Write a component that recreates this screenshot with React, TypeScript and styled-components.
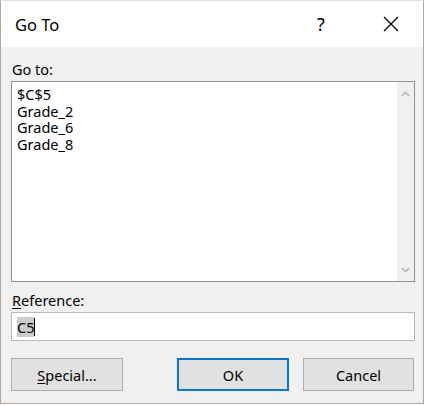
import React from "react";
import styled, { createGlobalStyle } from "styled-components";

const Global = createGlobalStyle`
  html, body { margin: 0; padding: 0; background: #ffffff; }
  body { font-family: "Noto Sans", "Open Sans", sans-serif; }
`;

const Window = styled.div`
  box-sizing: border-box;
  width: 424px;
  height: 404px;
  border: 1px solid #b5a697;
  border-top-color: #e6e0da;
  display: flex;
  flex-direction: column;
  background: #f0f0f0;
  color: #000;
`;

const TitleBar = styled.div`
  height: 46px;
  background: #ffffff;
  display: flex;
  align-items: center;
  padding-left: 14px;
  font-size: 16.5px;
`;

const Title = styled.span`
  flex: 1;
  margin-top: 1px;
`;

const TitleButton = styled.div<{ $w: number }>`
  width: ${(p) => p.$w}px;
  height: 46px;
  display: flex;
  align-items: center;
  justify-content: center;
  font-size: 18px;
`;

const Body = styled.div`
  flex: 1;
  display: flex;
  flex-direction: column;
  padding: 12px 8px 0 10px;
  font-size: 14.5px;
`;

const Label = styled.label`
  height: 20px;
  line-height: 20px;
  padding-left: 1px;
  margin-bottom: 2px;
`;

const U = styled.span`
  text-decoration: underline;
  text-underline-offset: 2px;
`;

const ListBox = styled.div`
  box-sizing: border-box;
  height: 201px;
  border: 1px solid #8f9297;
  background: #ffffff;
  display: flex;
`;

const Items = styled.div`
  flex: 1;
  padding: 4px 0 0 5px;
`;

const Item = styled.div`
  height: 16.5px;
  line-height: 16.5px;
`;

const ScrollBar = styled.div`
  width: 17px;
  background: #f0f0f0;
  display: flex;
  flex-direction: column;
  justify-content: space-between;
  align-items: center;
  padding: 9px 0 8px;
`;

const Input = styled.div`
  box-sizing: border-box;
  height: 29px;
  border: 1px solid #b9b9b9;
  background: #ffffff;
  display: flex;
  align-items: center;
  padding-left: 5px;
`;

const Selected = styled.span`
  background: #cccccc;
  line-height: 20px;
`;

const Caret = styled.span`
  display: inline-block;
  width: 1px;
  height: 18px;
  background: #000;
  vertical-align: middle;
`;

const Buttons = styled.div`
  display: flex;
  align-items: center;
  margin-top: 17px;
`;

const Button = styled.button<{ $default?: boolean; $w: number }>`
  box-sizing: border-box;
  width: ${(p) => p.$w}px;
  height: 33px;
  background: #e1e1e1;
  border: ${(p) => (p.$default ? "2px solid #0078d7" : "1px solid #adadad")};
  font-family: inherit;
  font-size: 14.5px;
  color: #000;
  padding: 0;
`;

const Chevron = ({ up }: { up?: boolean }) => (
  <svg width="9" height="6" viewBox="0 0 9 6">
    <path
      d={up ? "M0.8 5 L4.5 1.3 L8.2 5" : "M0.8 1 L4.5 4.7 L8.2 1"}
      fill="none"
      stroke="#b4b4b4"
      strokeWidth="1.6"
    />
  </svg>
);

export default function App() {
  return (
    <>
      <Global />
      <Window>
        <TitleBar>
          <Title>Go To</Title>
          <TitleButton $w={76}>?</TitleButton>
          <TitleButton $w={64}>
            <svg width="16" height="16" viewBox="0 0 16 16">
              <path d="M1 1 L15 15 M15 1 L1 15" stroke="#000" strokeWidth="1.3" />
            </svg>
          </TitleButton>
        </TitleBar>
        <Body>
          <Label>Go to:</Label>
          <ListBox>
            <Items>
              <Item>$C$5</Item>
              <Item>Grade_2</Item>
              <Item>Grade_6</Item>
              <Item>Grade_8</Item>
            </Items>
            <ScrollBar>
              <Chevron up />
              <Chevron />
            </ScrollBar>
          </ListBox>
          <Label style={{ marginTop: 8 }}>
            <U>R</U>eference:
          </Label>
          <Input>
            <Selected>C5</Selected>
            <Caret />
          </Input>
          <Buttons>
            <Button $w={112}>
              <U>S</U>pecial...
            </Button>
            <Button $w={112} $default style={{ marginLeft: 54 }}>
              OK
            </Button>
            <Button $w={111} style={{ marginLeft: 14 }}>
              Cancel
            </Button>
          </Buttons>
        </Body>
      </Window>
    </>
  );
}
